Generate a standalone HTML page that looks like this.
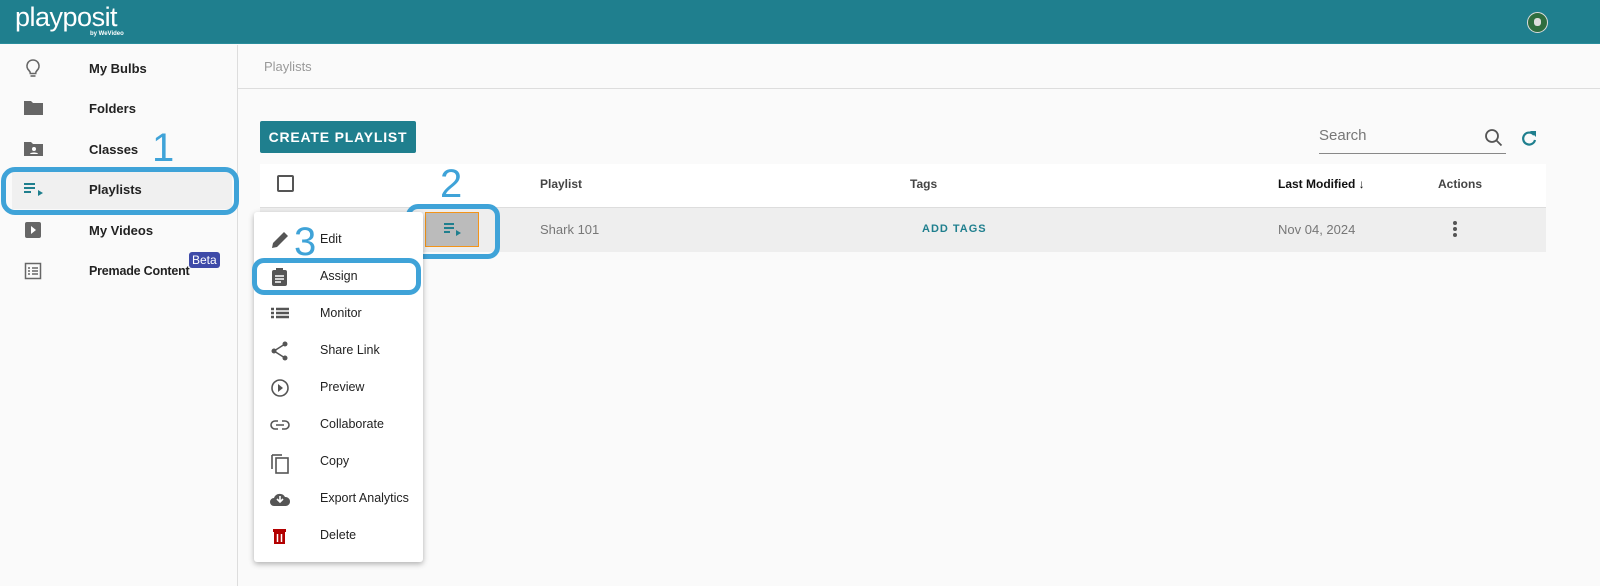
<!DOCTYPE html>
<html><head><meta charset="utf-8"><style>
*{box-sizing:border-box;margin:0;padding:0}
body{width:1600px;height:586px;overflow:hidden;background:#fafafa;font-family:"Liberation Sans",Arial,sans-serif;position:relative;color:#222}
.abs{position:absolute}
.hdr{left:0;top:0;width:1600px;height:44px;background:#1f7f8e;border-bottom:1px solid #2a8d9c}
.side{left:0;top:45px;width:238px;height:541px;background:#fafafa;border-right:1px solid #ddd}
.si{position:absolute;left:0;width:237px;height:40px;font-size:13px;font-weight:bold;color:#222}
.si span{position:absolute;left:89px;top:13px}
.si svg{position:absolute;left:23px;top:10px}
.ring{position:absolute;border:5px solid #3fa3d8;border-radius:14px}
.num{position:absolute;color:#3fa3d8;font-size:40px;font-family:"Liberation Sans",sans-serif;font-weight:300}
.menu{left:254px;top:212px;width:169px;height:350px;background:#fff;box-shadow:0 2px 6px rgba(0,0,0,.3);border-radius:3px}
.mi{position:absolute;left:0;width:169px;height:37px;font-size:12.5px;color:#222}
.mi span{position:absolute;left:66px;top:11px}
.mi svg{position:absolute;left:15px;top:8px}
</style></head><body>
<div class="abs hdr">
 <div class="abs" style="left:15px;top:2px;color:#fff;font-size:27px;letter-spacing:-0.5px">playposit</div>
 <div class="abs" style="left:90px;top:31px;color:#fff;font-size:6px;font-weight:bold">by WeVideo</div>
 <div class="abs" style="left:1527px;top:12px;width:21px;height:21px;border-radius:50%;background:#2f6e3f;border:1.5px solid #ddd"><div style="position:absolute;left:6px;top:5px;width:7px;height:8px;background:#ddd;border-radius:3px"></div></div>
</div>
<div class="abs side">
 <div class="si" style="top:3px"><svg width="20" height="22" viewBox="0 0 20 22"><path d="M10 2a6 6 0 0 0-4 10.5c1 1 1.3 2 1.3 3h5.4c0-1 .3-2 1.3-3A6 6 0 0 0 10 2z" fill="none" stroke="#666" stroke-width="1.6"/><path d="M7.5 18h5" stroke="#666" stroke-width="1.6"/></svg><span>My Bulbs</span></div>
 <div class="si" style="top:43px"><svg width="22" height="20"><path d="M1 3h7l2 2h10v12H1z" fill="#666"/></svg><span>Folders</span></div>
 <div class="si" style="top:84px"><svg width="22" height="20"><path d="M1 3h7l2 2h10v12H1z" fill="#666"/><circle cx="11" cy="10" r="2" fill="#fff"/><path d="M7 15c0-2 8-2 8 0z" fill="#fff"/></svg><span>Classes</span></div>
 <div class="si" style="top:124px;background:#f0f0f0;left:12px;width:220px"><svg width="22" height="20" style="left:11px"><path d="M1 5h11M1 9h11M1 13h7" stroke="#1f7f8e" stroke-width="2"/><path d="M15 11l5 3-5 3z" fill="#1f7f8e"/></svg><span style="left:77px">Playlists</span></div>
 <div class="si" style="top:165px"><svg width="22" height="20"><rect x="2" y="2" width="16" height="16" rx="2" fill="#666"/><path d="M8 6l5 4-5 4z" fill="#fff"/></svg><span>My Videos</span></div>
 <div class="si" style="top:206px"><svg width="22" height="20"><rect x="2.5" y="2.5" width="15" height="15" fill="none" stroke="#666" stroke-width="1.5"/><path d="M5 7h2M9 7h6M5 10h2M9 10h6M5 13h2M9 13h6" stroke="#666" stroke-width="1.5"/></svg><span style="font-size:12.5px;letter-spacing:-0.2px">Premade Content</span></div>
 <div class="abs" style="left:189px;top:207px;background:#3e4aa8;color:#fff;font-size:12px;padding:1px 3px;border-radius:3px">Beta</div>
</div>
<div class="ring" style="left:1px;top:167px;width:238px;height:48px"></div>
<div class="num" style="left:152px;top:126px">1</div>
<div class="abs" style="left:238px;top:44px;width:1362px;height:45px;border-bottom:1px solid #ddd"></div>
<div class="abs" style="left:264px;top:59px;font-size:13px;color:#999">Playlists</div>
<div class="abs" style="left:260px;top:121px;width:156px;height:32px;background:#1f7f8e;border-radius:2px;color:#fff;font-weight:bold;font-size:14px;letter-spacing:.8px;text-align:center;line-height:32px">CREATE PLAYLIST</div>
<div class="abs" style="left:1319px;top:127px;font-size:15px;color:#777">Search</div>
<div class="abs" style="left:1319px;top:153px;width:187px;border-bottom:1px solid #888"></div>
<svg class="abs" style="left:1484px;top:128px" width="20" height="20"><circle cx="8" cy="8" r="6" fill="none" stroke="#555" stroke-width="1.8"/><path d="M12.5 12.5l5 5" stroke="#555" stroke-width="1.8"/></svg>
<svg class="abs" style="left:1520px;top:129px" width="18" height="18"><path d="M14 6A6 6 0 1 0 15 11" fill="none" stroke="#1f7f8e" stroke-width="2.2"/><path d="M10 2h6v6z" fill="#1f7f8e"/></svg>
<div class="abs" style="left:260px;top:164px;width:1286px;height:88px;background:#fff"></div>
<div class="abs" style="left:260px;top:207px;width:1286px;height:45px;background:#eee;border-top:1px solid #ddd"></div>
<div class="abs" style="left:277px;top:175px;width:17px;height:17px;border:2px solid #555;border-radius:2px"></div>
<div class="abs" style="left:540px;top:177px;font-size:12px;font-weight:bold;color:#444">Playlist</div>
<div class="abs" style="left:910px;top:177px;font-size:12px;font-weight:bold;color:#444">Tags</div>
<div class="abs" style="left:1278px;top:177px;font-size:12px;font-weight:bold;color:#111">Last Modified ↓</div>
<div class="abs" style="left:1438px;top:177px;font-size:12px;font-weight:bold;color:#444">Actions</div>
<div class="abs" style="left:425px;top:212px;width:54px;height:35px;background:#bbb;border:1px solid #f39419"></div>
<svg class="abs" style="left:443px;top:222px" width="20" height="16"><path d="M1 2h10M1 6h10M1 10h6" stroke="#1f7f8e" stroke-width="2"/><path d="M13 8l5 3-5 3z" fill="#1f7f8e"/></svg>
<div class="ring" style="left:406px;top:204px;width:94px;height:55px;border-radius:12px"></div>
<div class="num" style="left:440px;top:162px">2</div>
<div class="abs" style="left:540px;top:222px;font-size:13px;color:#777">Shark 101</div>
<div class="abs" style="left:922px;top:223px;font-size:11px;font-weight:bold;color:#1f7f8e;letter-spacing:1px">ADD TAGS</div>
<div class="abs" style="left:1278px;top:222px;font-size:13px;color:#777">Nov 04, 2024</div>
<svg class="abs" style="left:1450px;top:220px" width="10" height="20"><circle cx="5" cy="3" r="2" fill="#555"/><circle cx="5" cy="9" r="2" fill="#555"/><circle cx="5" cy="15" r="2" fill="#555"/></svg>
<div class="abs menu">
 <div class="mi" style="top:9px"><svg width="22" height="22"><path d="M3 19l1-5L15 3l4 4L8 18z" fill="#555"/></svg><span>Edit</span></div>
 <div class="mi" style="top:46px"><svg width="22" height="22"><rect x="3" y="4" width="15" height="16" rx="2" fill="#555"/><rect x="7" y="2" width="7" height="4" fill="#555"/><path d="M6 10h9M6 13h9M6 16h6" stroke="#fff" stroke-width="1.4"/></svg><span>Assign</span></div>
 <div class="mi" style="top:83px"><svg width="22" height="22"><path d="M2 6h3M7 6h13M2 10h3M7 10h13M2 14h3M7 14h13" stroke="#555" stroke-width="2.5"/></svg><span>Monitor</span></div>
 <div class="mi" style="top:120px"><svg width="22" height="22"><circle cx="16" cy="4" r="2.5" fill="#555"/><circle cx="5" cy="11" r="2.5" fill="#555"/><circle cx="16" cy="18" r="2.5" fill="#555"/><path d="M16 4L5 11l11 7" fill="none" stroke="#555" stroke-width="1.5"/></svg><span>Share Link</span></div>
 <div class="mi" style="top:157px"><svg width="22" height="22"><circle cx="11" cy="11" r="8" fill="none" stroke="#555" stroke-width="1.6"/><path d="M9 7l5 4-5 4z" fill="#555"/></svg><span>Preview</span></div>
 <div class="mi" style="top:194px"><svg width="22" height="22"><path d="M9 7H6a4 4 0 0 0 0 8h3M13 7h3a4 4 0 0 1 0 8h-3M7 11h8" fill="none" stroke="#555" stroke-width="1.6"/></svg><span>Collaborate</span></div>
 <div class="mi" style="top:231px"><svg width="22" height="24"><path d="M3 4v14" stroke="#555" stroke-width="1.6"/><path d="M3 4h10" stroke="#555" stroke-width="1.6"/><rect x="7" y="7" width="12" height="15" fill="none" stroke="#555" stroke-width="1.6"/></svg><span>Copy</span></div>
 <div class="mi" style="top:268px"><svg width="22" height="22"><path d="M5 18a4 4 0 0 1 0-8 6 6 0 0 1 11-1 4.5 4.5 0 0 1 1 9z" fill="#555"/><path d="M8 11l3 3 3-3M11 8v6" stroke="#fff" stroke-width="1.6" fill="none"/></svg><span>Export Analytics</span></div>
 <div class="mi" style="top:305px"><svg width="22" height="22"><rect x="4" y="4" width="13" height="3" fill="#b30000"/><rect x="5" y="6" width="11" height="13" fill="#b30000"/><path d="M8.5 9v8M12.5 9v8" stroke="#fff" stroke-width="1.5"/></svg><span>Delete</span></div>
</div>
<div class="ring" style="left:252px;top:258px;width:169px;height:37px;border-radius:12px"></div>
<div class="num" style="left:294px;top:220px">3</div>
</body></html>
